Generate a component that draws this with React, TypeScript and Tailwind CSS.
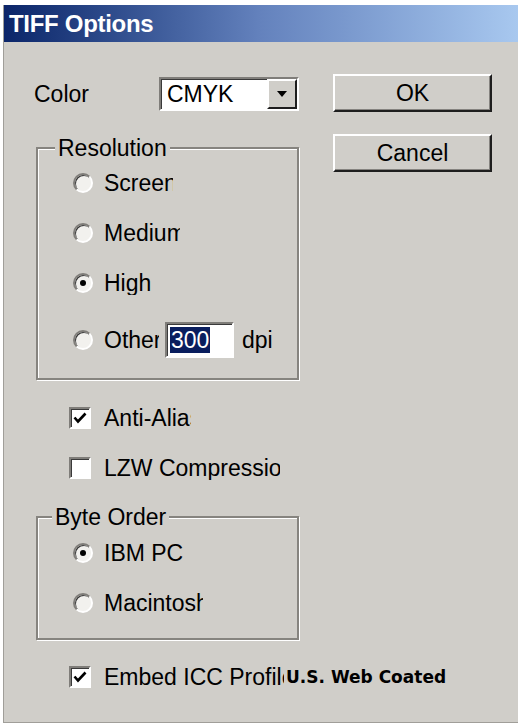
import React from 'react';

const FACE = 'bg-[#d0cec9]';

// Classic sunken radio button
const Radio: React.FC<{ checked?: boolean }> = ({ checked }) => (
  <span className="w-[20px] h-[20px] shrink-0 rounded-full border-2 border-t-[#7f7d79] border-l-[#7f7d79] border-b-white border-r-white bg-[#f2f1ee] shadow-[inset_1px_1px_0_#3a3a3a] flex items-center justify-center">
    {checked && <span className="w-[6px] h-[6px] rounded-full bg-black" />}
  </span>
);

// Classic sunken checkbox
const Check: React.FC<{ checked?: boolean }> = ({ checked }) => (
  <span className="w-[22px] h-[22px] shrink-0 border-2 border-t-[#7f7d79] border-l-[#7f7d79] border-b-white border-r-white bg-white shadow-[inset_1px_1px_0_#3a3a3a] flex items-center justify-center">
    {checked && (
      <svg width="16" height="16" viewBox="0 0 16 16">
        <path d="M2.5 7.5 L6 11.5 L13.5 3.5" fill="none" stroke="#000" strokeWidth="2.6" />
      </svg>
    )}
  </span>
);

const RadioRow: React.FC<{ label: string; checked?: boolean; clip?: string }> = ({ label, checked, clip }) => (
  <div className="h-[44px] flex items-center pl-[35px]">
    <Radio checked={checked} />
    <span className={`ml-[11px] shrink-0 whitespace-nowrap overflow-hidden ${clip ?? ''}`}>{label}</span>
  </div>
);

const CheckRow: React.FC<{ label: string; checked?: boolean; clip: string }> = ({ label, checked, clip }) => (
  <div className="h-[30px] flex items-center pl-[35px]">
    <Check checked={checked} />
    <span className={`ml-[13px] shrink-0 whitespace-nowrap overflow-hidden ${clip}`}>{label}</span>
  </div>
);

const Button: React.FC<{ label: string }> = ({ label }) => (
  <button className={`w-[159px] h-[38px] ${FACE} border-2 border-t-white border-l-white border-r-[#1e1e1e] border-b-[#1e1e1e] shadow-[inset_-1px_-1px_0_#85837f] flex items-center justify-center`}>
    {label}
  </button>
);

export default function App() {
  return (
    <div className="w-[524px] h-[726px] bg-white pt-[5px] pl-[3px] pr-[6px] pb-[3px] font-['Liberation_Sans',Arial,sans-serif] text-[23px] text-black leading-none">
      <div className={`h-full ${FACE} border-l border-b border-[#a09e99] flex flex-col`}>
        <div className="h-[37px] bg-gradient-to-r from-[#0b2569] via-[#6482bd] to-[#a8c8ef] flex items-center pl-[5px]">
          <span className="text-white font-bold text-[24px] tracking-[-0.3px]">TIFF Options</span>
        </div>

        <div className="flex pl-[30px] pt-[32px]">
          {/* left column */}
          <div className="w-[265px] shrink-0 flex flex-col">
            <div className="mt-[3px] h-[34px] flex items-center">
              <span className="w-[125px] shrink-0">Color</span>
              <div className="w-[140px] h-[34px] shrink-0 border-2 border-t-[#7f7d79] border-l-[#7f7d79] border-b-white border-r-white bg-white shadow-[inset_1px_1px_0_#3a3a3a] flex items-center">
                <span className="ml-[6px] flex-1">CMYK</span>
                <span className={`w-[30px] h-[30px] ${FACE} border-2 border-t-white border-l-white border-r-[#1e1e1e] border-b-[#1e1e1e] flex items-center justify-center`}>
                  <svg width="12" height="8" viewBox="0 0 12 8">
                    <path d="M1 1 L11 1 L6 7 Z" fill="#000" />
                  </svg>
                </span>
              </div>
            </div>

            <fieldset className="mt-[24px] ml-[2px] w-[263px] p-0 m-0 border-2 border-[#86847f] shadow-[inset_1px_1px_0_#fff,1px_1px_0_#fff]">
              <legend className={`ml-[17px] px-[3px] h-[26px] leading-[26px] ${FACE}`}>Resolution</legend>
              <div className="flex flex-col gap-[6px] pb-[20px]">
                <RadioRow label="Screen" clip="w-[69px]" />
                <RadioRow label="Medium" clip="w-[76px]" />
                <RadioRow label="High" checked />
                <div className="mt-[11px] h-[36px] flex items-center pl-[35px]">
                  <Radio />
                  <span className="ml-[11px] w-[55px] shrink-0 whitespace-nowrap overflow-hidden">Other</span>
                  <div className="ml-[6px] w-[69px] h-[36px] shrink-0 border-2 border-t-[#7f7d79] border-l-[#7f7d79] border-b-white border-r-white bg-white shadow-[inset_1px_1px_0_#3a3a3a] flex items-center">
                    <span className="ml-[3px] h-[26px] px-[1px] bg-[#0a1e5e] text-white flex items-center">300</span>
                  </div>
                  <span className="ml-[8px]">dpi</span>
                </div>
              </div>
            </fieldset>

            <div className="mt-[23px] flex flex-col gap-[20px]">
              <CheckRow label="Anti-Alias" checked clip="w-[87px]" />
              <CheckRow label="LZW Compression" clip="w-[176px]" />
            </div>

            <fieldset className="mt-[21px] ml-[2px] w-[263px] p-0 m-0 border-2 border-[#86847f] shadow-[inset_1px_1px_0_#fff,1px_1px_0_#fff]">
              <legend className={`ml-[14px] px-[3px] h-[26px] leading-[26px] ${FACE}`}>Byte Order</legend>
              <div className="flex flex-col gap-[6px] pt-[1px] pb-[13px]">
                <RadioRow label="IBM PC" checked />
                <RadioRow label="Macintosh" clip="w-[99px]" />
              </div>
            </fieldset>

            <div className="mt-[22px] h-[30px] flex items-center pl-[35px] w-[460px]">
              <Check checked />
              <span className="ml-[13px] w-[180px] shrink-0 whitespace-nowrap overflow-hidden">Embed ICC Profile</span>
              <span className="ml-[2px] shrink-0 whitespace-nowrap font-['DejaVu_Sans',sans-serif] font-bold text-[17px]">U.S. Web Coated</span>
            </div>
          </div>

          {/* right column */}
          <div className="ml-[34px] flex flex-col gap-[22px]">
            <Button label="OK" />
            <Button label="Cancel" />
          </div>
        </div>
      </div>
    </div>
  );
}
